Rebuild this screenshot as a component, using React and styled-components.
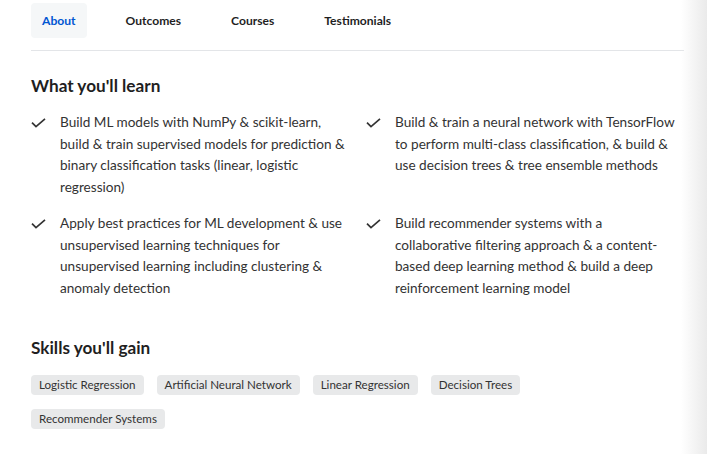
import React from "react";
import styled, { createGlobalStyle } from "styled-components";

const Global = createGlobalStyle`
  html, body { margin: 0; padding: 0; background: #fff; }
  body { font-family: Lato, "Noto Sans", sans-serif; color: #1f1f1f; }
  * { box-sizing: border-box; }
`;

const Page = styled.div`
  position: relative;
  width: 707px;
  height: 454px;
  overflow: hidden;
  padding: 3px 23px 0 31px;
`;

const Fade = styled.div`
  position: absolute;
  top: 0;
  right: 0;
  width: 26px;
  height: 100%;
  background: linear-gradient(to right, rgba(240,240,240,0), rgba(234,234,234,1));
  pointer-events: none;
`;

const Tabs = styled.nav`
  display: flex;
  align-items: center;
  gap: 28px;
  border-bottom: 1px solid #e3e5e8;
  padding-bottom: 12px;
`;

const Tab = styled.div`
  height: 35px;
  display: flex;
  align-items: center;
  padding: 0 11px;
  border-radius: 4px;
  font-size: 12.1px;
  font-weight: 700;
  color: ${p => (p.$active ? "#0056d2" : "#1f1f1f")};
  background: ${p => (p.$active ? "#f5f7f8" : "transparent")};
`;

const Heading = styled.h2`
  margin: ${p => p.$mt}px 0 0;
  font-size: 17.2px;
  font-weight: 700;
  line-height: 24px;
  color: #1f1f1f;
`;

const Grid = styled.div`
  display: grid;
  grid-template-columns: 319px 318px;
  column-gap: 16px;
  row-gap: 14px;
  margin-top: 14px;
`;

const Item = styled.div`
  display: flex;
  align-items: flex-start;
  gap: 14px;
`;

const Check = styled.svg`
  flex: none;
  width: 15px;
  height: 10px;
  margin-top: 6px;
`;

const ItemText = styled.p`
  margin: 0;
  width: 287px;
  font-size: 13.6px;
  line-height: 21.7px;
  color: #333;
`;

const Chips = styled.div`
  display: flex;
  flex-wrap: wrap;
  gap: 14px 13px;
  margin-top: 15px;
  width: 560px;
`;

const Chip = styled.span`
  display: inline-flex;
  align-items: center;
  height: 20px;
  padding: 0 8px;
  border-radius: 4px;
  background: #e8e9ea;
  font-size: 11.6px;
  color: #333;
`;

const CheckIcon = () => (
  <Check viewBox="0 0 15 10" fill="none">
    <path d="M1 4.6 L5 8.6 L14 0.8" stroke="#333" strokeWidth="1.7" />
  </Check>
);

const items = [
  "Build ML models with NumPy & scikit-learn, build & train supervised models for prediction & binary classification tasks (linear, logistic regression)",
  "Build & train a neural network with TensorFlow to perform multi-class classification, & build & use decision trees & tree ensemble methods",
  "Apply best practices for ML development & use unsupervised learning techniques for unsupervised learning including clustering & anomaly detection",
  "Build recommender systems with a collaborative filtering approach & a content-based deep learning method & build a deep reinforcement learning model",
];

const skills = [
  "Logistic Regression",
  "Artificial Neural Network",
  "Linear Regression",
  "Decision Trees",
  "Recommender Systems",
];

export default function App() {
  return (
    <Page>
      <Global />
      <Tabs>
        <Tab $active>About</Tab>
        <Tab>Outcomes</Tab>
        <Tab>Courses</Tab>
        <Tab>Testimonials</Tab>
      </Tabs>
      <Heading $mt={23}>What you'll learn</Heading>
      <Grid>
        {items.map(t => (
          <Item key={t}>
            <CheckIcon />
            <ItemText>{t}</ItemText>
          </Item>
        ))}
      </Grid>
      <Heading $mt={36}>Skills you'll gain</Heading>
      <Chips>
        {skills.map(s => (
          <Chip key={s}>{s}</Chip>
        ))}
      </Chips>
      <Fade />
    </Page>
  );
}
